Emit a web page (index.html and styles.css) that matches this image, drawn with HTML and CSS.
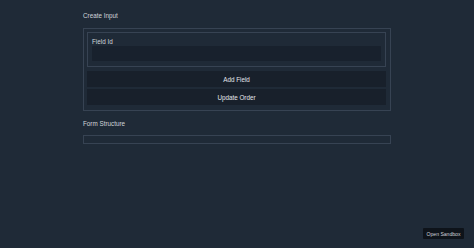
FILE: index.html
```html
<!DOCTYPE html>
<html lang="en">
<head>
  <meta charset="UTF-8" />
  <meta name="viewport" content="width=device-width, initial-scale=1" />
  <title>Form Builder</title>
  <link rel="stylesheet" href="styles.css">
</head>
<body>
  <div id="container">
    <div class="section-title">Create Input</div>
    <div class="panel">
      <div class="field-box">
        <label class="field-label" for="fieldId">Field Id</label>
        <input id="fieldId" class="field-input" type="text" />
      </div>
      <button class="action-btn">Add Field</button>
      <button class="action-btn">Update Order</button>
    </div>
    <div class="section-title structure-title">Form Structure</div>
    <div class="structure-box"></div>
  </div>
  <button class="sandbox-btn">Open Sandbox</button>
</body>
</html>
```

FILE: styles.css
```css
* {
  margin: 0;
  padding: 0;
  box-sizing: border-box;
}
html, body {
  width: 100%;
  height: 100%;
  background: #1f2a37;
  color: #d1d5db;
  font-family: 'Liberation Sans', Arial, sans-serif;
  font-size: 6.3px;
}
#container {
  width: 308px;
  margin-left: 83px;
  padding-top: 11px;
}
.section-title {
  height: 10px;
  line-height: 10px;
  font-size: 6.3px;
  color: #d1d5db;
}
.panel {
  margin-top: 7px;
  border: 1px solid #374353;
  padding: 3px 4px 5px 3px;
  display: flex;
  flex-direction: column;
  gap: 2px;
}
.field-box {
  border: 1px solid #374353;
  padding: 4px 4px 5px 4px;
  margin-bottom: 2px;
  display: flex;
  flex-direction: column;
}
.field-label {
  height: 9px;
  line-height: 9px;
  font-size: 6.3px;
  color: #d1d5db;
}
.field-input {
  height: 15px;
  border: none;
  background: #18212d;
  border-radius: 1px;
  outline: none;
}
.action-btn {
  height: 16px;
  border: none;
  background: #18202b;
  color: #e5e7eb;
  font-family: 'Liberation Sans', Arial, sans-serif;
  font-size: 6.3px;
}
.structure-title {
  margin-top: 8px;
}
.structure-box {
  margin-top: 6px;
  height: 9px;
  border: 1px solid #374353;
}
.sandbox-btn {
  position: fixed;
  right: 10px;
  bottom: 9px;
  width: 41px;
  height: 11px;
  border: none;
  border-radius: 1px;
  background: #0e131a;
  color: #d1d5db;
  font-family: 'Liberation Sans', Arial, sans-serif;
  font-size: 5.1px;
}
```
